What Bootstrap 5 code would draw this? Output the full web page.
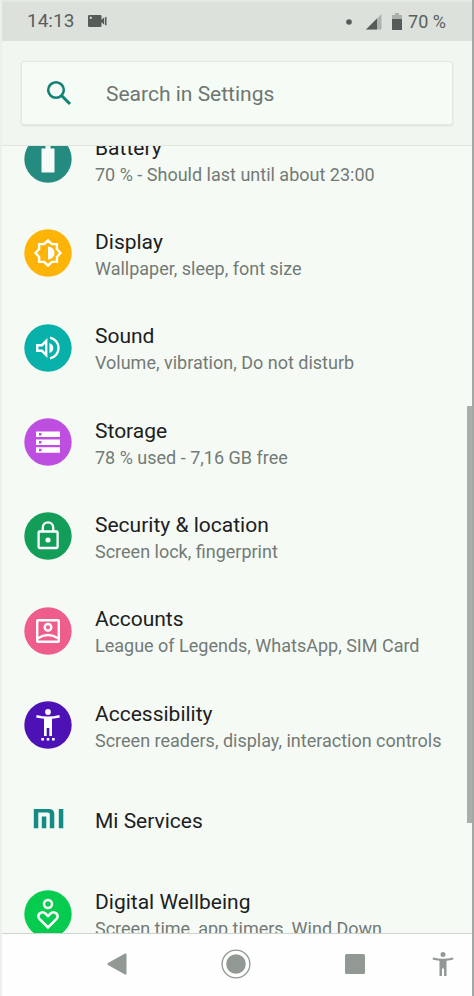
<!DOCTYPE html>
<html lang="en">
<head>
<meta charset="utf-8">
<meta name="viewport" content="width=device-width, initial-scale=1">
<title>Settings</title>
<link href="https://cdn.jsdelivr.net/npm/bootstrap@5.3.0/dist/css/bootstrap.min.css" rel="stylesheet">
<style>
body{font-family:Roboto,"Noto Sans",sans-serif;background:#f5faf5;color:#1c201d}
.phone{border-left:2px solid #edf1ed;border-right:2px solid #a3a8a4}
.statusbar{height:41px;padding:0 26px 0 25px;background:#dce1dc;color:#5a605b;font-size:18px;border-top:2px solid #e5e9e4}
.statusbar svg{display:block}
.clock{font-size:19px}
.camera{margin-left:14px}
.dot{margin-right:14px}
.signal{margin-right:10px}
.percent{padding-left:6px}
.topbar{padding:20px 19px 20px 19px;background:#f1f6f1;border-bottom:1px solid #dfe4df}
.searchbox{height:64px;padding-left:24px;gap:34px;background:#f5fbf5;border:1px solid #e3e8e3;border-radius:3px;box-shadow:0 1px 2px #d9dfd9}
.searchbox input,.searchbox input:focus{background:transparent;font-size:21px;color:#1c201d}
.searchbox input::placeholder{color:#6f7671;opacity:1}
.viewport-area{min-height:0}
.entries{margin:-34px 0 -28px}
.entry{flex:1 1 94px;padding-left:22px;gap:23px;white-space:nowrap}
.entry svg{width:48px;height:48px}
.entry-text{padding-top:4px}
.entry-title{font-size:21px;line-height:26px}
.entry-note{font-size:18px;line-height:27px;color:#737a75}
.thumb{top:33%;right:-2px;width:7px;height:53%;background:#a9aeaa;border-right:2px solid #777d78}
.navkeys{height:63px;background:#fdfefd;border-top:1px solid #cfd4cf;padding:0 0 2px 57px}
.navkeys button{line-height:0;flex:1 1 0}
.navkeys .assist{flex:0 0 58px}
</style>
</head>
<body>
<div class="phone d-flex flex-column vh-100 overflow-hidden">
  <header class="flex-shrink-0">
    <div class="statusbar d-flex align-items-center">
      <span class="clock">14:13</span>
      <svg class="camera" width="19" height="13" viewBox="0 0 19 13" fill="#555b56" aria-hidden="true"><rect width="13.500" height="12" rx="1.200"/><path d="M13 5l3-2.500v7L13 7zM16.800 2.500l1.700-.8v9l-1.700-1z"/><rect x="1.800" y="1.800" width="2" height="2" fill="#dce1dc"/></svg>
      <svg class="dot ms-auto" width="6" height="6" viewBox="0 0 6 6" aria-hidden="true"><circle cx="3" cy="3" r="2.8" fill="#555b56"/></svg>
      <svg class="signal" width="16" height="16" viewBox="0 0 16 16" aria-hidden="true"><path d="M0 15.500L15.500 0v15.500z" fill="#aeb3af"/><path d="M0 15.500L11 4.500v11z" fill="#555b56"/></svg>
      <svg width="10" height="18" viewBox="0 0 10 18" aria-hidden="true"><path d="M0 7V2h3V0h4v2h3v5z" fill="#aab0ab"/><path d="M0 6h10v11H0z" fill="#555b56"/></svg>
      <span class="percent">70 %</span>
    </div>
    <form class="topbar" role="search">
      <div class="searchbox d-flex align-items-center">
        <label for="q" class="lh-1"><svg width="26" height="26" viewBox="0 0 26 26" fill="none" stroke="#138274" stroke-width="2.6" role="img" aria-label="Search"><circle cx="10" cy="10" r="7.8"/><path d="M15.5 15.5l8.5 8.5" stroke-width="3"/></svg></label>
        <input id="q" type="text" class="form-control border-0 shadow-none p-0 pt-1" placeholder="Search in Settings">
      </div>
    </form>
  </header>

  <main class="viewport-area position-relative flex-grow-1 d-flex flex-column">
    <div class="d-flex flex-column flex-grow-1 overflow-hidden viewport-area">
    <nav class="entries d-flex flex-column flex-grow-1" aria-label="Settings">
      <a href="#battery" class="entry d-flex align-items-center text-reset text-decoration-none">
        <svg class="flex-shrink-0" viewBox="0 0 48 48" aria-hidden="true"><circle cx="24" cy="24" r="23.7" fill="#258b80"/><path d="M17.500 13.500h4v-3h5v3h4v24h-13z" fill="#f7fcf9"/></svg>
        <span class="entry-text"><span class="entry-title d-block">Battery</span><span class="entry-note d-block">70 % - Should last until about 23:00</span></span>
      </a>
      <a href="#display" class="entry d-flex align-items-center text-reset text-decoration-none">
        <svg class="flex-shrink-0" viewBox="0 0 48 48" aria-hidden="true"><circle cx="24" cy="24" r="23.7" fill="#feb406"/><path d="M24 11.500l3.900 3.600h5v5L36.500 24l-3.600 3.900v5h-5L24 36.500l-3.900-3.600h-5v-5L11.500 24l3.600-3.900v-5h5z" fill="none" stroke="#fff" stroke-width="2.400"/><path d="M24 17.500a6.500 6.500 0 0 1 0 13z" fill="#fff"/></svg>
        <span class="entry-text"><span class="entry-title d-block">Display</span><span class="entry-note d-block">Wallpaper, sleep, font size</span></span>
      </a>
      <a href="#sound" class="entry d-flex align-items-center text-reset text-decoration-none">
        <svg class="flex-shrink-0" viewBox="0 0 48 48" aria-hidden="true"><circle cx="24" cy="24" r="23.7" fill="#08b0aa"/><path d="M13.200 21.200h4.800l4.200-4.200v14l-4.200-4.200h-4.800z" fill="none" stroke="#fff" stroke-width="2.400"/><path d="M25.500 19q3.800 1.500 3.800 5t-3.800 5z" fill="#fff"/><path d="M26 13.600a10.600 10.600 0 0 1 0 20.800" fill="none" stroke="#fff" stroke-width="2.400"/></svg>
        <span class="entry-text"><span class="entry-title d-block">Sound</span><span class="entry-note d-block">Volume, vibration, Do not disturb</span></span>
      </a>
      <a href="#storage" class="entry d-flex align-items-center text-reset text-decoration-none">
        <svg class="flex-shrink-0" viewBox="0 0 48 48" aria-hidden="true"><circle cx="24" cy="24" r="23.7" fill="#bd4ee0"/><path d="M12 13.500h24v5.500H12zM12 21.500h24V27H12zM12 29.300h24v5.500H12z" fill="#fff"/><path d="M15 15h2.500v2.500H15zM15 23h2.500v2.500H15zM15 30.800h2.500v2.500H15z" fill="#bd4ee0"/></svg>
        <span class="entry-text"><span class="entry-title d-block">Storage</span><span class="entry-note d-block">78 % used - 7,16 GB free</span></span>
      </a>
      <a href="#security" class="entry d-flex align-items-center text-reset text-decoration-none">
        <svg class="flex-shrink-0" viewBox="0 0 48 48" aria-hidden="true"><circle cx="24" cy="24" r="23.700" fill="#129d58"/><g fill="none" stroke="#fff" stroke-width="2.300"><rect x="14.600" y="19.500" width="19" height="16.500" rx="1"/><path d="M18.800 19.500v-4a5.200 5.200 0 0 1 10.400 0v4"/></g><circle cx="24" cy="28" r="2.600" fill="#fff"/></svg>
        <span class="entry-text"><span class="entry-title d-block">Security &amp; location</span><span class="entry-note d-block">Screen lock, fingerprint</span></span>
      </a>
      <a href="#accounts" class="entry d-flex align-items-center text-reset text-decoration-none">
        <svg class="flex-shrink-0" viewBox="0 0 48 48" aria-hidden="true"><circle cx="24" cy="24" r="23.700" fill="#ee5d8b"/><g fill="none" stroke="#fff" stroke-width="2.400"><rect x="13.200" y="13.200" width="21.600" height="21.600" rx="1"/><circle cx="24" cy="20.300" r="3.300"/><path d="M13.500 31.500q10.500-7 21 0"/></g></svg>
        <span class="entry-text"><span class="entry-title d-block">Accounts</span><span class="entry-note d-block">League of Legends, WhatsApp, SIM Card</span></span>
      </a>
      <a href="#accessibility" class="entry d-flex align-items-center text-reset text-decoration-none">
        <svg class="flex-shrink-0" viewBox="0 0 48 48" aria-hidden="true"><circle cx="24" cy="24" r="23.700" fill="#4c12b5"/><g fill="#fff"><circle cx="24" cy="11" r="2.900"/><path d="M12.700 13.900Q24 16.900 35.300 13.900l.6 2.500q-4 1-7.900 1.400V35h-2.700v-8h-2.600v8H20V17.800q-3.900-.4-7.900-1.400zM17.300 37H20v2.600h-2.700zM22.700 37h2.600v2.600h-2.600zM28 37h2.700v2.600H28z"/></g></svg>
        <span class="entry-text"><span class="entry-title d-block">Accessibility</span><span class="entry-note d-block">Screen readers, display, interaction controls</span></span>
      </a>
      <a href="#mi" class="entry d-flex align-items-center text-reset text-decoration-none">
        <svg class="flex-shrink-0" viewBox="0 0 48 48" fill="#158c83" aria-hidden="true"><path d="M9.800 14H25q5.300 0 5.300 5.300v14h-4.500V19.500q0-2-2-2h-9.500v15.800H9.800zM17.800 21.500h4.500v11.800h-4.500zM34.800 14h4.500v19.300h-4.500z"/></svg>
        <span class="entry-text entry-title">Mi Services</span>
      </a>
      <a href="#wellbeing" class="entry d-flex align-items-center text-reset text-decoration-none">
        <svg class="flex-shrink-0" viewBox="0 0 48 48" aria-hidden="true"><circle cx="24" cy="24" r="23.700" fill="#05cc4e"/><g fill="none" stroke="#fff" stroke-width="2.500"><circle cx="24" cy="14" r="4"/><path d="M24 37.500l-8.300-8.300q-2.700-3 0-5.700 2.800-2.500 5.700 0l2.600 2.600 2.600-2.600q2.900-2.500 5.700 0 2.700 2.700 0 5.700z"/></g></svg>
        <span class="entry-text"><span class="entry-title d-block">Digital Wellbeing</span><span class="entry-note d-block">Screen time, app timers, Wind Down</span></span>
      </a>
    </nav>
    </div>
    <div class="thumb position-absolute"></div>
  </main>

  <footer class="navkeys flex-shrink-0 d-flex align-items-center">
    <button type="button" class="btn p-0 border-0" aria-label="Back"><svg width="32" height="30" viewBox="0 0 32 30"><path d="M6 14L23 4.500q1.500-.5 1.500 1v19q0 1.500-1.500 1L6 16q-1.500-1 0-2z" fill="#929893"/></svg></button>
    <button type="button" class="btn p-0 border-0" aria-label="Home"><svg width="30" height="30" viewBox="0 0 30 30"><circle cx="15" cy="15" r="13.900" fill="none" stroke="#929893" stroke-width="1.300"/><circle cx="15" cy="15" r="9.800" fill="#929893"/></svg></button>
    <button type="button" class="btn p-0 border-0" aria-label="Recent apps"><svg width="22" height="22" viewBox="0 0 22 22"><rect x="1" y="1" width="20" height="20" rx="1.500" fill="#929893"/></svg></button>
    <button type="button" class="assist btn p-0 border-0" aria-label="Accessibility"><svg width="22" height="26" viewBox="0 0 22 26" fill="#929893"><circle cx="11" cy="3.500" r="2.500"/><path d="M1 6.500q10 2.500 20 0l.4 2q-3.400.8-6.900 1.200V25H12v-7.500h-2V25H7.500V9.700Q4 9.300.6 8.500z"/></svg></button>
  </footer>
</div>
<script src="https://cdn.jsdelivr.net/npm/bootstrap@5.3.0/dist/js/bootstrap.bundle.min.js"></script>
</body>
</html>
